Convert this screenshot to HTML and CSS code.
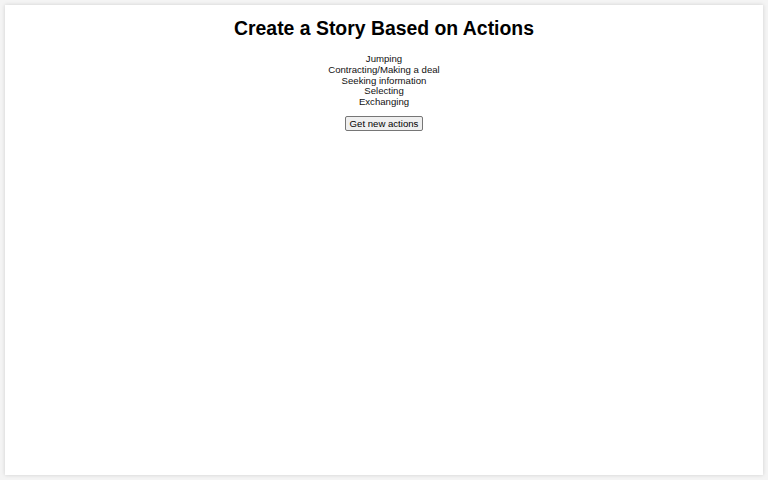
FILE: index.html
```html
<!DOCTYPE html>
<html lang="en">
<head>
  <meta charset="UTF-8" />
  <meta name="viewport" content="width=device-width, initial-scale=1.0"/>
  <title>Story Actions</title>
  <link rel="stylesheet" href="styles.css">
</head>
<body>
  <div class="container">
    <h1 class="title">Create a Story Based on Actions</h1>

    <ul class="action-list" id="actions">
      <li>Jumping</li>
      <li>Contracting/Making a deal</li>
      <li>Seeking information</li>
      <li>Selecting</li>
      <li>Exchanging</li>
    </ul>

    <button class="new-actions" type="button">Get new actions</button>
  </div>
</body>
</html>
```

FILE: styles.css
```css
body {
  margin: 0;
  padding: 5px;
  background: #f4f4f4;
  font-family: "Liberation Sans", Arial, sans-serif;
}

.container {
  height: 470px;
  box-sizing: border-box;
  background: #fff;
  box-shadow: 0 0 4px rgba(0,0,0,0.15);
  text-align: center;
  padding-top: 12px;
}

.title {
  margin: 0 0 14px;
  font-size: 19.4px;
  font-weight: bold;
  color: #000;
}

.action-list {
  list-style: none;
  margin: 0 0 5px;
  padding: 0;
  font-size: 9.6px;
  line-height: 10.75px;
  color: #111;
}

.new-actions {
  font-family: "Liberation Sans", Arial, sans-serif;
  font-size: 9.6px;
  padding: 1px 4px;
  background: #efefef;
  border: 1px solid #767676;
  border-radius: 2px;
  color: #000;
}
```
